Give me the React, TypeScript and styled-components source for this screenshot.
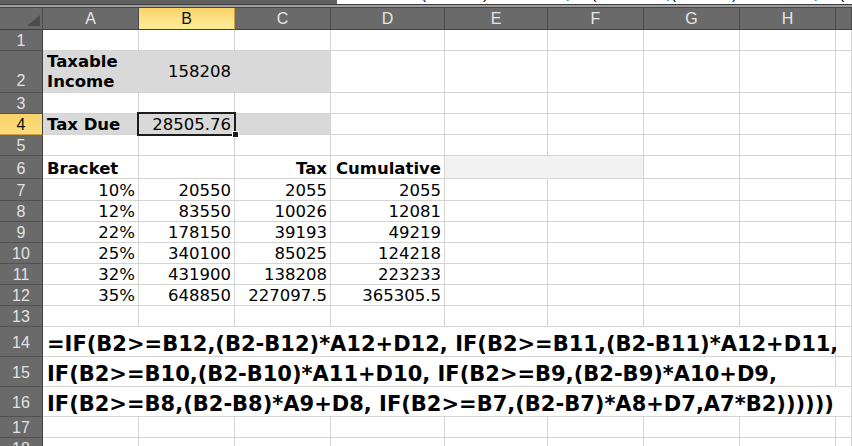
import React from 'react';
import styled, { createGlobalStyle } from 'styled-components';

const GlobalStyle = createGlobalStyle`
  html, body {
    margin: 0;
    padding: 0;
    background: #fff;
    overflow: hidden;
  }
  body {
    font-family: 'DejaVu Sans', Verdana, sans-serif;
  }
`;

const COLS = '43px 96px 96px 96px 114px 103px 96px 96px 96px 1fr';
const GRID = '#d4d4d4';
const HEAD = '#6a6a6a';
const HEAD_LINE = '#4b4b4b';
const FILL = '#d9d9d9';
const LIGHT_FILL = '#f2f2f2';

const Sheet = styled.div`
  width: 852px;
  height: 446px;
  overflow: hidden;
  background: #fff;
`;

const TopStrip = styled.div`
  display: flex;
  height: 4px;
`;

const NameBox = styled.div`
  width: 337px;
  background: #5f5f5f;
`;

const FormulaBar = styled.div`
  flex: 1;
  background: #fff;
  overflow: hidden;
`;

// only the descenders of the formula bar text peek out under the window edge
const FormulaBarText = styled.div`
  margin-top: -15px;
  padding-left: 84px;
  font-family: 'Liberation Sans', Arial, sans-serif;
  font-size: 15px;
  line-height: 18px;
  letter-spacing: 1px;
  white-space: nowrap;
  color: #000;
`;

const Divider = styled.div`
  box-sizing: border-box;
  height: 4px;
  border-top: 1px solid #3c3c3c;
  border-bottom: 1px solid #474747;
  background: #9e9e9e;
`;

const Row = styled.div<{ $h: number }>`
  display: grid;
  grid-template-columns: ${COLS};
  height: ${p => p.$h}px;
`;

const ColHead = styled.div<{ $active?: boolean }>`
  box-sizing: border-box;
  position: relative;
  display: flex;
  align-items: center;
  justify-content: center;
  background: ${p =>
    p.$active ? 'linear-gradient(180deg, #f8d468 0%, #fde287 55%, #ffec98 100%)' : HEAD};
  border-right: 1px solid ${p => (p.$active ? '#cf9d3c' : HEAD_LINE)};
  border-bottom: 1px solid #3f3f3f;
  color: ${p => (p.$active ? '#111' : '#e6e6e6')};
  font-family: 'Liberation Sans', Arial, sans-serif;
  font-size: 16px;
  padding-top: 1px;
`;

const Corner = styled(ColHead)`
  &::after {
    content: '';
    position: absolute;
    right: 2px;
    bottom: 3px;
    width: 0;
    height: 0;
    border-left: 13px solid transparent;
    border-bottom: 11px solid #4c4c4c;
  }
`;

const RowHead = styled.div<{ $active?: boolean; $pb?: number }>`
  box-sizing: border-box;
  display: flex;
  align-items: flex-end;
  justify-content: center;
  padding-bottom: ${p => p.$pb ?? 1}px;
  background: ${p => (p.$active ? 'linear-gradient(180deg, #f9d46c, #fcdc7c)' : HEAD)};
  border-right: 1px solid #3f3f3f;
  border-bottom: 1px solid ${p => (p.$active ? '#d19f3d' : '#525252')};
  color: ${p => (p.$active ? '#111' : '#e2e2e2')};
  font-family: 'Liberation Sans', Arial, sans-serif;
  font-size: 16px;
  line-height: 16px;
`;

interface CellProps {
  $fill?: string;
  $join?: boolean;
  $right?: boolean;
  $bold?: boolean;
  $middle?: boolean;
  $wrap?: boolean;
  $span?: number;
}

const Cell = styled.div<CellProps>`
  box-sizing: border-box;
  position: relative;
  display: flex;
  align-items: ${p => (p.$middle ? 'center' : 'flex-end')};
  justify-content: ${p => (p.$right ? 'flex-end' : 'flex-start')};
  grid-column: span ${p => p.$span ?? 1};
  padding: 0 3px 0 4px;
  background: ${p => p.$fill ?? '#fff'};
  border-right: 1px solid ${p => (p.$join && p.$fill ? p.$fill : GRID)};
  border-bottom: 1px solid ${GRID};
  color: #000;
  font-size: 16.5px;
  font-weight: ${p => (p.$bold ? 700 : 400)};
  line-height: ${p => (p.$wrap ? '20px' : 'normal')};
  white-space: ${p => (p.$wrap ? 'normal' : 'nowrap')};
`;

const FormulaCell = styled(Cell)`
  font-size: 21px;
  font-weight: 700;
  overflow: visible;
`;

const Selection = styled.div`
  position: absolute;
  left: -2px;
  top: -2px;
  width: 99px;
  height: 24px;
  box-sizing: border-box;
  border: 2px solid #1c1c1c;
  z-index: 2;
`;

const FillHandle = styled.div`
  position: absolute;
  left: 93px;
  top: 17px;
  width: 7px;
  height: 7px;
  box-sizing: border-box;
  background: #1c1c1c;
  border: 1px solid #fff;
  z-index: 3;
`;

const LETTERS = ['A', 'B', 'C', 'D', 'E', 'F', 'G', 'H', ''];

const brackets = [
  ['10%', '20550', '2055', '2055'],
  ['12%', '83550', '10026', '12081'],
  ['22%', '178150', '39193', '49219'],
  ['25%', '340100', '85025', '124218'],
  ['32%', '431900', '138208', '223233'],
  ['35%', '648850', '227097.5', '365305.5'],
];

const formula = [
  '=IF(B2>=B12,(B2-B12)*A12+D12, IF(B2>=B11,(B2-B11)*A12+D11,',
  'IF(B2>=B10,(B2-B10)*A11+D10, IF(B2>=B9,(B2-B9)*A10+D9,',
  'IF(B2>=B8,(B2-B8)*A9+D8, IF(B2>=B7,(B2-B7)*A8+D7,A7*B2))))))',
];

const blanks = (n: number, prefix: string) =>
  Array.from({ length: n }, (_, i) => <Cell key={`${prefix}-${i}`} />);

const EmptyRow = ({ n, h = 21 }: { n: number; h?: number }) => (
  <Row $h={h}>
    <RowHead>{n}</RowHead>
    {blanks(9, `r${n}`)}
  </Row>
);

const App = () => (
  <Sheet>
    <GlobalStyle />
    <TopStrip>
      <NameBox />
      <FormulaBar>
        <FormulaBarText>(B2-B12)*A12+D12, IF(B2&gt;=B11,(B2-B11)*A12+D11, IF(B2&gt;=B10,(</FormulaBarText>
      </FormulaBar>
    </TopStrip>
    <Divider />

    <Row $h={22}>
      <Corner />
      {LETTERS.map(l => (
        <ColHead key={l || 'I'} $active={l === 'B'}>
          {l}
        </ColHead>
      ))}
    </Row>

    <EmptyRow n={1} />

    <Row $h={42}>
      <RowHead $pb={3}>2</RowHead>
      <Cell $fill={FILL} $join $bold $wrap>
        Taxable Income
      </Cell>
      <Cell $fill={FILL} $join $right $middle>
        158208
      </Cell>
      <Cell $fill={FILL} />
      {blanks(6, 'r2')}
    </Row>

    <EmptyRow n={3} />

    <Row $h={21}>
      <RowHead $active>4</RowHead>
      <Cell $fill={FILL} $join $bold>
        Tax Due
      </Cell>
      <Cell $fill={FILL} $join $right>
        28505.76
        <Selection />
        <FillHandle />
      </Cell>
      <Cell $fill={FILL} />
      {blanks(6, 'r4')}
    </Row>

    <EmptyRow n={5} />

    <Row $h={23}>
      <RowHead>6</RowHead>
      <Cell $bold>Bracket</Cell>
      <Cell />
      <Cell $bold $right>
        Tax
      </Cell>
      <Cell $bold $right>
        Cumulative
      </Cell>
      <Cell $fill={LIGHT_FILL} $join />
      <Cell $fill={LIGHT_FILL} />
      {blanks(3, 'r6')}
    </Row>

    {brackets.map((b, i) => (
      <Row key={b[0]} $h={i === 0 ? 22 : 21}>
        <RowHead>{i + 7}</RowHead>
        {b.map((v, j) => (
          <Cell key={j} $right>
            {v}
          </Cell>
        ))}
        {blanks(5, `b${i}`)}
      </Row>
    ))}

    <EmptyRow n={13} />

    {formula.map((f, i) => (
      <Row key={i} $h={30}>
        <RowHead $pb={5}>{i + 14}</RowHead>
        <FormulaCell $span={i === 2 ? 9 : 8}>{f}</FormulaCell>
        {i < 2 && <Cell />}
      </Row>
    ))}

    <EmptyRow n={17} />
    <EmptyRow n={18} />
  </Sheet>
);

export default App;
